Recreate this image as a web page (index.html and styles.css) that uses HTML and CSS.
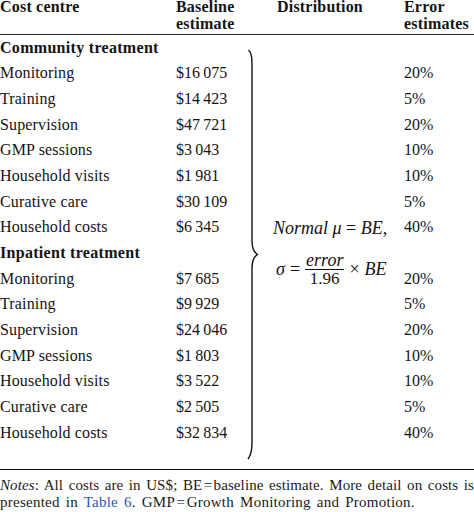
FILE: index.html
```html
<!DOCTYPE html>
<html>
<head>
<meta charset="utf-8">
<link rel="stylesheet" href="styles.css">
</head>
<body>
<div class="tbl">
  <div class="thead">
    <div class="hc">Cost centre</div>
    <div class="hc">Baseline<br>estimate</div>
    <div class="hc dist-h">Distribution</div>
    <div class="hc">Error<br>estimates</div>
  </div>
  <div class="tbody">
    <div class="dist">
      <svg class="brace" width="14" height="412" viewBox="0 0 14 412">
        <path d="M1.5 1 C4 3 5 7 5 14 L5 192 C5 199 6.5 203 10.5 205.5 C6.5 208 5 212 5 219 L5 394 C5 401 4 406 1 410" fill="none" stroke="#111" stroke-width="1.4"/>
      </svg>
      <div class="math">
        <div class="mline"><i>Normal</i> <i>μ</i> = <i>BE</i>,</div>
        <div class="mline m2"><i>σ</i> = <span class="frac"><span class="num"><i>error</i></span><span class="den">1.96</span></span> × <i>BE</i></div>
      </div>
    </div>

    <div class="c1 b">Community treatment</div><div class="c2"></div><div class="c4"></div>
    <div class="c1">Monitoring</div><div class="c2">$16&#8201;075</div><div class="c4">20%</div>
    <div class="c1">Training</div><div class="c2">$14&#8201;423</div><div class="c4">5%</div>
    <div class="c1">Supervision</div><div class="c2">$47&#8201;721</div><div class="c4">20%</div>
    <div class="c1">GMP sessions</div><div class="c2">$3&#8201;043</div><div class="c4">10%</div>
    <div class="c1">Household visits</div><div class="c2">$1&#8201;981</div><div class="c4">10%</div>
    <div class="c1">Curative care</div><div class="c2">$30&#8201;109</div><div class="c4">5%</div>
    <div class="c1">Household costs</div><div class="c2">$6&#8201;345</div><div class="c4">40%</div>
    <div class="c1 b">Inpatient treatment</div><div class="c2"></div><div class="c4"></div>
    <div class="c1">Monitoring</div><div class="c2">$7&#8201;685</div><div class="c4">20%</div>
    <div class="c1">Training</div><div class="c2">$9&#8201;929</div><div class="c4">5%</div>
    <div class="c1">Supervision</div><div class="c2">$24&#8201;046</div><div class="c4">20%</div>
    <div class="c1">GMP sessions</div><div class="c2">$1&#8201;803</div><div class="c4">10%</div>
    <div class="c1">Household visits</div><div class="c2">$3&#8201;522</div><div class="c4">10%</div>
    <div class="c1">Curative care</div><div class="c2">$2&#8201;505</div><div class="c4">5%</div>
    <div class="c1">Household costs</div><div class="c2">$32&#8201;834</div><div class="c4">40%</div>
  </div>
</div>
<div class="notes">
  <span class="nl1"><i>Notes</i>: All costs are in US$; BE&#8202;=&#8202;baseline estimate. More detail on costs is</span>
  <span class="nl2">presented in <span class="link">Table 6</span>. GMP&#8202;=&#8202;Growth Monitoring and Promotion.</span>
</div>
</body>
</html>
```

FILE: styles.css
```css
html, body {
  margin: 0;
  padding: 0;
  background: #fff;
}
body {
  width: 474px;
  overflow: hidden;
  font-family: "Liberation Serif", "Times New Roman", serif;
  font-size: 16px;
  color: #141414;
}
.tbl {
  margin-top: -2px;
}
.thead {
  display: grid;
  grid-template-columns: 176px 101px 127px 90px;
  line-height: 17px;
  padding-bottom: 2px;
  border-bottom: 1.2px solid #222;
  font-weight: bold;
  white-space: nowrap;
}
.hc {
  letter-spacing: 0.2px;
}
.tbody {
  display: grid;
  grid-template-columns: 176px 72px 156px 70px;
  grid-template-rows: repeat(16, 25.67px);
  grid-auto-flow: row;
  padding-bottom: 23px;
  border-bottom: 1.8px solid #111;
}
.tbody > div {
  display: flex;
  align-items: center;
  white-space: nowrap;
}
.c1 { grid-column: 1; letter-spacing: 0.15px; }
.c2 { grid-column: 2; }
.c4 { grid-column: 4; }
.b { font-weight: bold; letter-spacing: 0.3px; }
.tbody > .dist {
  grid-column: 3;
  grid-row: 1 / span 16;
  align-items: flex-start;
  position: relative;
}
.brace {
  flex: none;
  margin-top: 14px;
  margin-left: -1px;
}
.math {
  margin-top: 183px;
  margin-left: 12px;
  font-size: 18px;
  display: flex;
  flex-direction: column;
}
.mline {
  line-height: 20px;
  height: 20px;
}
.m2 {
  margin-top: 13px;
  margin-left: 3px;
  display: flex;
  align-items: center;
  gap: 5px;
  height: 36px;
}
.frac {
  display: inline-flex;
  flex-direction: column;
  align-items: center;
  line-height: 15px;
}
.num {
  padding: 0 1px 1px;
  border-bottom: 1.3px solid #111;
}
.den {
  padding-top: 1px;
  font-size: 17px;
}
.notes {
  margin: 7px 0 0;
  font-size: 15px;
  line-height: 17px;
  color: #1a1a1a;
  display: flex;
  flex-direction: column;
}
.nl1 {
  display: block;
  white-space: nowrap;
  text-align: justify;
  text-align-last: justify;
  letter-spacing: 0.1px;
}
.nl2 {
  display: block;
  white-space: nowrap;
  letter-spacing: 0.25px;
  word-spacing: 2px;
}
.link {
  color: #2b5aa8;
}
```
